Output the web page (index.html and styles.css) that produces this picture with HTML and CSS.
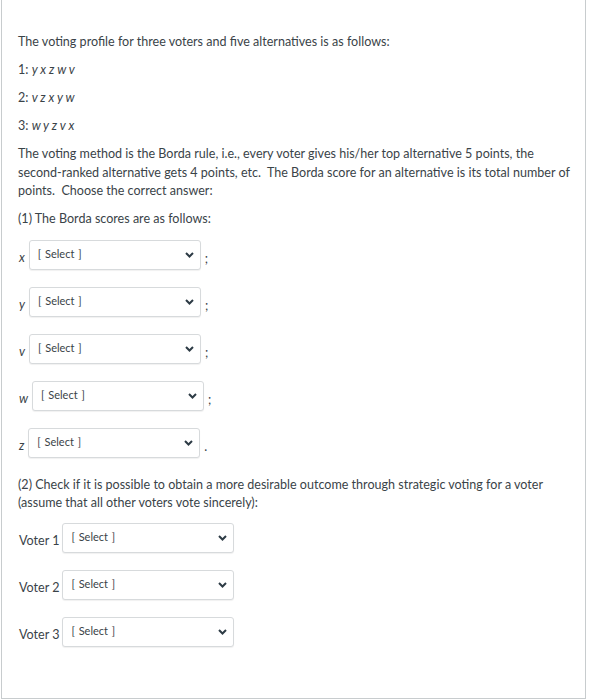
FILE: index.html
```html
<!DOCTYPE html>
<html lang="en">
<head>
<meta charset="utf-8">
<title>Borda rule question</title>
<link rel="stylesheet" href="styles.css">
</head>
<body>
<div class="question">
  <p class="para">The voting profile for three voters and five alternatives is as follows:</p>
  <p class="para">1: <i>y x z w v</i></p>
  <p class="para">2: <i>v z x y w</i></p>
  <p class="para">3: <i>w y z v x</i></p>
  <p class="para">The voting method is the Borda rule, i.e., every voter gives his/her top alternative 5 points, the second-ranked alternative gets 4 points, etc.&nbsp; The Borda score for an alternative is its total number of points.&nbsp; Choose the correct answer:</p>
  <p class="para">(1) The Borda scores are as follows:</p>

  <div class="rows first">
    <div class="row"><span class="lab">x</span><span class="sel"><span class="seltext">[ Select ]</span><svg class="chev" width="9" height="6" viewBox="0 0 9 6"><path d="M1 1 L4.5 4.5 L8 1" fill="none" stroke="#2d3b45" stroke-width="2"/></svg></span><span class="punct">;</span></div>
    <div class="row"><span class="lab">y</span><span class="sel"><span class="seltext">[ Select ]</span><svg class="chev" width="9" height="6" viewBox="0 0 9 6"><path d="M1 1 L4.5 4.5 L8 1" fill="none" stroke="#2d3b45" stroke-width="2"/></svg></span><span class="punct">;</span></div>
    <div class="row"><span class="lab">v</span><span class="sel"><span class="seltext">[ Select ]</span><svg class="chev" width="9" height="6" viewBox="0 0 9 6"><path d="M1 1 L4.5 4.5 L8 1" fill="none" stroke="#2d3b45" stroke-width="2"/></svg></span><span class="punct">;</span></div>
    <div class="row"><span class="lab">w</span><span class="sel"><span class="seltext">[ Select ]</span><svg class="chev" width="9" height="6" viewBox="0 0 9 6"><path d="M1 1 L4.5 4.5 L8 1" fill="none" stroke="#2d3b45" stroke-width="2"/></svg></span><span class="punct">;</span></div>
    <div class="row"><span class="lab">z</span><span class="sel"><span class="seltext">[ Select ]</span><svg class="chev" width="9" height="6" viewBox="0 0 9 6"><path d="M1 1 L4.5 4.5 L8 1" fill="none" stroke="#2d3b45" stroke-width="2"/></svg></span><span class="punct">.</span></div>
  </div>

  <p class="para">(2) Check if it is possible to obtain a more desirable outcome through strategic voting for a voter (assume that all other voters vote sincerely):</p>

  <div class="rows voters">
    <div class="row"><span class="vlab">Voter 1</span><span class="sel"><span class="seltext">[ Select ]</span><svg class="chev" width="9" height="6" viewBox="0 0 9 6"><path d="M1 1 L4.5 4.5 L8 1" fill="none" stroke="#2d3b45" stroke-width="2"/></svg></span></div>
    <div class="row"><span class="vlab">Voter 2</span><span class="sel"><span class="seltext">[ Select ]</span><svg class="chev" width="9" height="6" viewBox="0 0 9 6"><path d="M1 1 L4.5 4.5 L8 1" fill="none" stroke="#2d3b45" stroke-width="2"/></svg></span></div>
    <div class="row"><span class="vlab">Voter 3</span><span class="sel"><span class="seltext">[ Select ]</span><svg class="chev" width="9" height="6" viewBox="0 0 9 6"><path d="M1 1 L4.5 4.5 L8 1" fill="none" stroke="#2d3b45" stroke-width="2"/></svg></span></div>
  </div>
</div>
</body>
</html>
```
FILE: styles.css
```css
html, body {
  margin: 0;
  padding: 0;
  background: #ffffff;
}
body {
  font-family: Lato, "Open Sans", "Liberation Sans", sans-serif;
  font-size: 12.55px;
  color: #3a4348;
}
.question {
  box-sizing: border-box;
  width: 585px;
  height: 699px;
  margin-left: 1px;
  border: 1px solid #c8ccce;
  border-top: none;
  padding: 33px 6px 0 16px;
}
.para {
  margin: 0 0 9.5px 0;
  line-height: 18.5px;
}
.para i {
  font-style: italic;
}
.rows {
  display: flex;
  flex-direction: column;
  gap: 17px;
}
.rows.first {
  margin: 11px 0 18px 0;
}
.rows.voters {
  margin: 10px 0 0 0;
}
.row {
  display: flex;
  align-items: center;
  height: 30px;
}
.lab {
  font-style: italic;
  padding-left: 1px;
  margin-right: 4px;
  margin-top: 6px;
}
.vlab {
  margin-right: 3px;
  margin-top: 5px;
  padding-left: 1px;
}
.sel {
  box-sizing: border-box;
  width: 172px;
  height: 30px;
  display: flex;
  align-items: center;
  justify-content: space-between;
  padding: 0 5px 0 8px;
  background: #ffffff;
  border: 1px solid #d7dadc;
  border-radius: 3px;
  box-shadow: 0 1px 1px rgba(0, 0, 0, 0.06);
}
.seltext {
  font-size: 11px;
  color: #3a4348;
  margin-top: -2px;
  word-spacing: 1px;
}
.chev {
  display: block;
  margin-right: 1px;
}
.punct {
  margin-left: 4px;
  margin-top: 7px;
}
```
